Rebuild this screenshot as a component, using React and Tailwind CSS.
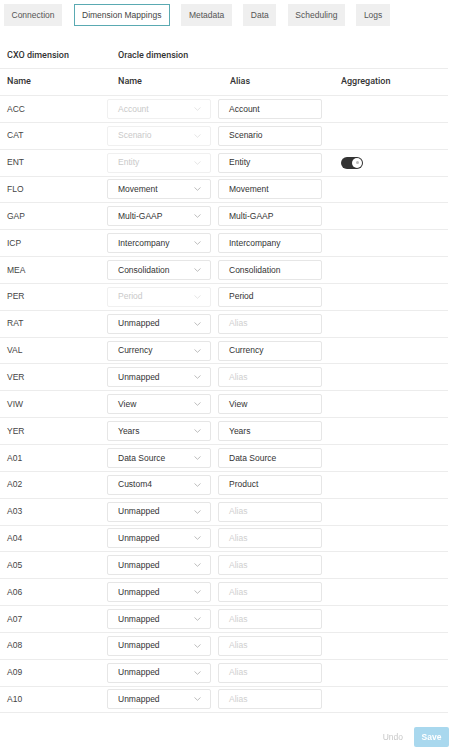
import React from 'react';

const TABS = ['Connection', 'Dimension Mappings', 'Metadata', 'Data', 'Scheduling', 'Logs'];

const ROWS = [
    { cxo: 'ACC', name: 'Account', alias: 'Account', locked: true },
    { cxo: 'CAT', name: 'Scenario', alias: 'Scenario', locked: true },
    { cxo: 'ENT', name: 'Entity', alias: 'Entity', locked: true, aggregation: true },
    { cxo: 'FLO', name: 'Movement', alias: 'Movement' },
    { cxo: 'GAP', name: 'Multi-GAAP', alias: 'Multi-GAAP' },
    { cxo: 'ICP', name: 'Intercompany', alias: 'Intercompany' },
    { cxo: 'MEA', name: 'Consolidation', alias: 'Consolidation' },
    { cxo: 'PER', name: 'Period', alias: 'Period', locked: true },
    { cxo: 'RAT', name: 'Unmapped', alias: '' },
    { cxo: 'VAL', name: 'Currency', alias: 'Currency' },
    { cxo: 'VER', name: 'Unmapped', alias: '' },
    { cxo: 'VIW', name: 'View', alias: 'View' },
    { cxo: 'YER', name: 'Years', alias: 'Years' },
    { cxo: 'A01', name: 'Data Source', alias: 'Data Source' },
    { cxo: 'A02', name: 'Custom4', alias: 'Product' },
    { cxo: 'A03', name: 'Unmapped', alias: '' },
    { cxo: 'A04', name: 'Unmapped', alias: '' },
    { cxo: 'A05', name: 'Unmapped', alias: '' },
    { cxo: 'A06', name: 'Unmapped', alias: '' },
    { cxo: 'A07', name: 'Unmapped', alias: '' },
    { cxo: 'A08', name: 'Unmapped', alias: '' },
    { cxo: 'A09', name: 'Unmapped', alias: '' },
    { cxo: 'A10', name: 'Unmapped', alias: '' },
];

const GRID = 'grid grid-cols-[107px_111px_123px_1fr] items-center';

export default function App() {
    return (
        <div className="min-h-[751px] bg-white pt-1 text-[8.5px] text-[#444]" style={{ fontFamily: '"Liberation Sans", Arial, sans-serif' }}>
            <div className="flex gap-[11.5px] pl-1">
                {TABS.map(t => (
                    <div
                        key={t}
                        className={t === 'Dimension Mappings'
                            ? 'h-[22px] px-[7.5px] flex items-center bg-white border border-[#5aaab2] text-[#444]'
                            : 'h-[22px] px-[7.5px] flex items-center bg-[#efefef] text-[#555]'}
                    >
                        {t}
                    </div>
                ))}
            </div>

            <div className="mt-[17px] w-[448px]">
                <div className={`${GRID} h-[26px] border-b border-[#ececec]`}>
                    <HeadCell className="pl-[7px]">CXO dimension</HeadCell>
                    <HeadCell className="pl-[11px] col-span-2">Oracle dimension</HeadCell>
                </div>
                <div className={`${GRID} h-[27px] border-b border-[#ececec]`}>
                    <HeadCell className="pl-[7px]">Name</HeadCell>
                    <HeadCell className="pl-[11px]">Name</HeadCell>
                    <HeadCell className="pl-[12px]">Alias</HeadCell>
                    <HeadCell>Aggregation</HeadCell>
                </div>
                {ROWS.map(r => <MappingRow key={r.cxo} row={r} />)}
            </div>

            <div className="fixed bottom-1 right-[11px] flex items-center gap-[11px]">
                <span className="text-[#c8c8c8]">Undo</span>
                <button className="h-5 w-[35px] rounded-[2px] bg-[#a9d8ee] text-white font-bold text-[8.5px]">Save</button>
            </div>
        </div>
    );
}

function HeadCell({ children, className = '' }) {
    return (
        <div className={`${className} text-[#333] font-medium text-[9px]`} style={{ fontFamily: 'Roboto, "Liberation Sans", sans-serif' }}>
            {children}
        </div>
    );
}

function MappingRow({ row }) {
    return (
        <div className={`${GRID} h-[26.85px] border-b border-[#ececec]`}>
            <div className="pl-[7px] text-[#444]">{row.cxo}</div>
            <div>
                <div className={`w-[104px] h-5 flex items-center justify-between pl-[10px] pr-[9px] border rounded-[2px] ${row.locked ? 'border-[#f0f0f0] text-[#c9c9c9]' : 'border-[#e6e6e6] text-[#333]'}`}>
                    <span>{row.name}</span>
                    <Chevron faint={row.locked} />
                </div>
            </div>
            <div>
                <div className="w-[104px] h-5 flex items-center pl-[10px] border border-[#e6e6e6] rounded-[2px]">
                    {row.alias ? <span className="text-[#333]">{row.alias}</span> : <span className="text-[#cfcfcf]">Alias</span>}
                </div>
            </div>
            <div>
                {row.aggregation && (
                    <div className="w-[22px] h-3 rounded-full bg-[#333] flex items-center justify-end pr-[1px]">
                        <div className="w-[10px] h-[10px] rounded-full bg-white flex items-center justify-center">
                            <div className="w-[3px] h-[3px] rounded-full bg-[#bbb]" />
                        </div>
                    </div>
                )}
            </div>
        </div>
    );
}

function Chevron({ faint }) {
    return (
        <svg width="7" height="4" viewBox="0 0 7 4" fill="none">
            <path d="M0.5 0.5 L3.5 3.3 L6.5 0.5" stroke={faint ? '#e2e2e2' : '#b5b5b5'} strokeWidth="0.9" />
        </svg>
    );
}
